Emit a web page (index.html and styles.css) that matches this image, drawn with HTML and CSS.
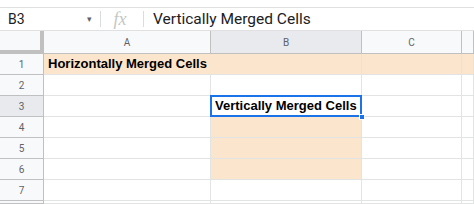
FILE: index.html
```html
<!DOCTYPE html>
<html lang="en">
<head>
    <meta charset="UTF-8">
    <title>Merged Cells</title>
    <link rel="stylesheet" href="styles.css">
</head>
<body>

<div class="top-gap"></div>

<div class="formula-bar">
    <div class="name-box">
        <span class="cell-ref">B3</span>
        <span class="caret">&#9662;</span>
    </div>
    <div class="sep"></div>
    <div class="fx">fx</div>
    <div class="sep"></div>
    <div class="formula-text">Vertically Merged Cells</div>
</div>

<div class="sheet">
    <!-- header row -->
    <div class="corner"></div>
    <div class="col-head">A</div>
    <div class="col-head active">B</div>
    <div class="col-head">C</div>
    <div class="col-head"></div>

    <!-- row 1 -->
    <div class="row-head">1</div>
    <div class="cell fill no-right"><span class="bold">Horizontally Merged Cells</span></div>
    <div class="cell fill"></div>
    <div class="cell fill"></div>
    <div class="cell fill"></div>

    <!-- row 2 -->
    <div class="row-head">2</div>
    <div class="cell"></div>
    <div class="cell"></div>
    <div class="cell"></div>
    <div class="cell"></div>

    <!-- row 3 -->
    <div class="row-head active">3</div>
    <div class="cell"></div>
    <div class="cell selected">
        <span class="bold">Vertically Merged Cells</span>
        <div class="sel-box"></div>
        <div class="handle"></div>
    </div>
    <div class="cell"></div>
    <div class="cell"></div>

    <!-- row 4 -->
    <div class="row-head">4</div>
    <div class="cell"></div>
    <div class="cell fill"></div>
    <div class="cell"></div>
    <div class="cell"></div>

    <!-- row 5 -->
    <div class="row-head">5</div>
    <div class="cell"></div>
    <div class="cell fill"></div>
    <div class="cell"></div>
    <div class="cell"></div>

    <!-- row 6 -->
    <div class="row-head">6</div>
    <div class="cell"></div>
    <div class="cell fill"></div>
    <div class="cell"></div>
    <div class="cell"></div>

    <!-- row 7 -->
    <div class="row-head">7</div>
    <div class="cell"></div>
    <div class="cell"></div>
    <div class="cell"></div>
    <div class="cell"></div>

    <!-- start of row 8, cut off by the window -->
    <div class="row-head"></div>
    <div class="cell"></div>
    <div class="cell"></div>
    <div class="cell"></div>
    <div class="cell"></div>
</div>

</body>
</html>
```

FILE: styles.css
```css
* {
    box-sizing: border-box;
}
body {
    margin: 0;
    background: #fff;
    font-family: Roboto, "Liberation Sans", Arial, sans-serif;
    overflow: hidden;
}
.top-gap {
    height: 8px;
    border-bottom: 1px solid #e0e0e0;
}
.formula-bar {
    display: flex;
    align-items: center;
    height: 23px;
    border-bottom: 1px solid #e0e0e0;
    color: #202124;
    font-size: 14px;
}
.name-box {
    display: flex;
    align-items: center;
    justify-content: space-between;
    width: 100px;
    padding: 0 8px 0 8px;
}
.caret {
    font-size: 9px;
    color: #5f6368;
}
.sep {
    width: 1px;
    height: 16px;
    background: #dadce0;
}
.fx {
    width: 42px;
    text-align: center;
    font-family: "Liberation Serif", serif;
    font-style: italic;
    font-size: 18px;
    color: #c4c7c5;
    padding-right: 4px;
}
.formula-text {
    padding-left: 9px;
    font-size: 15.5px;
}
.sheet {
    display: grid;
    grid-template-columns: 44px 167px 151px 100px 1fr;
    grid-template-rows: 23px repeat(7, 21px) 3px;
    font-family: "Liberation Sans", Arial, sans-serif;
}
.corner {
    background: #f8f9fa;
    border-right: 4px solid #c0c0c0;
    border-bottom: 4px solid #c0c0c0;
}
.col-head, .row-head {
    background: #f8f9fa;
    border-right: 1px solid #c0c0c0;
    border-bottom: 1px solid #c0c0c0;
    font-family: Roboto, sans-serif;
    font-size: 10px;
    color: #5f6368;
    display: flex;
    align-items: center;
    justify-content: center;
}
.col-head.active, .row-head.active {
    background: #e8eaed;
}
.cell {
    position: relative;
    border-right: 1px solid #e2e3e3;
    border-bottom: 1px solid #e2e3e3;
    font-size: 13px;
    color: #000;
    padding: 2px 3px 0 4px;
    white-space: nowrap;
    overflow: visible;
}
.cell.no-right {
    border-right-color: transparent;
    z-index: 1;
}
.fill {
    background: #fce5cd;
}
.bold {
    font-weight: bold;
}
.selected {
    z-index: 2;
}
.sel-box {
    position: absolute;
    left: -1px;
    top: -1px;
    right: -1px;
    bottom: -1px;
    border: 2px solid #1a73e8;
}
.handle {
    position: absolute;
    right: -4px;
    bottom: -4px;
    width: 6px;
    height: 6px;
    background: #1a73e8;
    border: 1px solid #fff;
}
```
